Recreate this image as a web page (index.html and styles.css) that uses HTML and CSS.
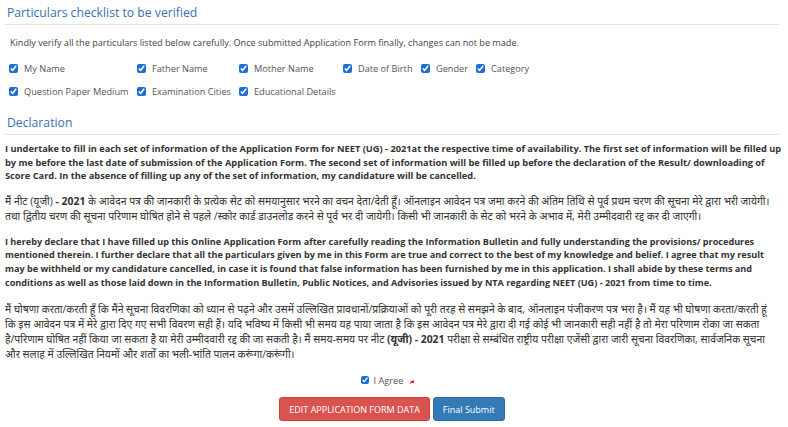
FILE: index.html
```html
<!DOCTYPE html>
<html lang="en">
<head>
<meta charset="utf-8">
<title>Particulars checklist</title>
<link rel="stylesheet" href="styles.css">
</head>
<body>
<div class="page">
  <h2 class="section-title">Particulars checklist to be verified</h2>
  <p class="note">Kindly verify all the particulars listed below carefully. Once submitted Application Form finally, changes can not be made.</p>
  <div class="checklist">
    <label class="check"><input type="checkbox" checked><span>My Name</span></label>
    <label class="check"><input type="checkbox" checked><span>Father Name</span></label>
    <label class="check"><input type="checkbox" checked><span>Mother Name</span></label>
    <label class="check"><input type="checkbox" checked><span>Date of Birth</span></label>
    <label class="check"><input type="checkbox" checked><span>Gender</span></label>
    <label class="check"><input type="checkbox" checked><span>Category</span></label>
    <label class="check"><input type="checkbox" checked><span>Question Paper Medium</span></label>
    <label class="check"><input type="checkbox" checked><span>Examination Cities</span></label>
    <label class="check"><input type="checkbox" checked><span>Educational Details</span></label>
  </div>

  <h2 class="section-title decl-title">Declaration</h2>
  <div class="declaration">
    <p class="en en-lead">I undertake to fill in each set of information of the Application Form for NEET (UG) - 2021at the respective time of availability. The first set of information will be filled up<br>by me before the last date of submission of the Application Form. The second set of information will be filled up before the declaration of the Result/ downloading of<br>Score Card. In the absence of filling up any of the set of information, my candidature will be cancelled.</p>
    <p class="hi" lang="hi">मैं नीट (यूजी) <b>- 2021</b> के आवेदन पत्र की जानकारी के प्रत्येक सेट को समयानुसार भरने का वचन देता/देती हूँ। ऑनलाइन आवेदन पत्र जमा करने की अंतिम तिथि से पूर्व प्रथम चरण की सूचना मेरे द्वारा भरी जायेगी।<br>तथा द्वितीय चरण की सूचना परिणाम घोषित होने से पहले /स्कोर कार्ड डाउनलोड करने से पूर्व भर दी जायेगी। किसी भी जानकारी के सेट को भरने के अभाव में, मेरी उम्मीदवारी रद्द कर दी जाएगी।</p>
    <p class="en en-main">I hereby declare that I have filled up this Online Application Form after carefully reading the Information Bulletin and fully understanding the provisions/ procedures<br>mentioned therein. I further declare that all the particulars given by me in this Form are true and correct to the best of my knowledge and belief. I agree that my result<br>may be withheld or my candidature cancelled, in case it is found that false information has been furnished by me in this application. I shall abide by these terms and<br>conditions as well as those laid down in the Information Bulletin, Public Notices, and Advisories issued by NTA regarding NEET (UG) - 2021 from time to time.</p>
    <p class="hi" lang="hi">मैं घोषणा करता/करती हूँ कि मैंने सूचना विवरणिका को ध्यान से पढ़ने और उसमें उल्लिखित प्रावधानों/प्रक्रियाओं को पूरी तरह से समझने के बाद, ऑनलाइन पंजीकरण पत्र भरा है। मैं यह भी घोषणा करता/करती हूं<br>कि इस आवेदन पत्र में मेरे द्वारा दिए गए सभी विवरण सही हैं। यदि भविष्य में किसी भी समय यह पाया जाता है कि इस आवेदन पत्र मेरे द्वारा दी गई कोई भी जानकारी सही नहीं है तो मेरा परिणाम रोका जा सकता<br>है/परिणाम घोषित नहीं किया जा सकता है या मेरी उम्मीदवारी रद्द की जा सकती है। मैं समय-समय पर नीट <b>(यूजी) - 2021</b> परीक्षा से सम्बंधित राष्ट्रीय परीक्षा एजेंसी द्वारा जारी सूचना विवरणिका, सार्वजनिक सूचना<br>और सलाह में उल्लिखित नियमों और शर्तों का भली-भांति पालन करूंगा/करूंगी।</p>
  </div>

  <div class="agree">
    <label class="check"><input type="checkbox" checked><span>I Agree</span></label>
    <svg class="req" width="7" height="5" viewBox="0 0 7 5" aria-hidden="true"><path d="M0.5 4.5 L3 2.2 L2.2 1 L6.5 0.5 L5.5 3.4 L4.3 2.8 Z" fill="#d9262b"/></svg>
  </div>

  <div class="actions">
    <button class="btn btn-danger" type="button">EDIT APPLICATION FORM DATA</button>
    <button class="btn btn-primary" type="button">Final Submit</button>
  </div>
</div>
</body>
</html>
```

FILE: styles.css
```css
html, body {
  margin: 0;
  padding: 0;
  background: #ffffff;
}

body {
  font-family: "Open Sans", "Noto Sans", "Noto Sans Devanagari", sans-serif;
  color: #333333;
  font-size: 9px;
}

.page {
  padding: 3px 2px 0 5px;
}

.section-title {
  margin: 0 7px 0 0;
  padding: 0 0 2px 2px;
  font-size: 12.2px;
  line-height: 19px;
  font-weight: 400;
  color: #3a6fb4;
  border-bottom: 1px solid #e3e3e3;
}

.note {
  margin: 11px 0 0 5px;
  font-size: 9.1px;
  line-height: 14px;
  color: #444;
}

.checklist {
  margin-top: 7px;
  padding-left: 4px;
  display: grid;
  grid-template-columns: 128px 102px 104px 78px 55px auto;
  grid-auto-rows: 23px;
  align-items: center;
}

.check {
  display: flex;
  align-items: center;
  gap: 6px;
  font-size: 9.2px;
  color: #555;
  white-space: nowrap;
}

.check input {
  margin: 0;
  width: 9px;
  height: 9px;
  accent-color: #1e6fd4;
}

.decl-title {
  margin-top: 10px;
}

.declaration {
  margin-top: 7px;
}

.declaration p {
  margin: 0 0 11px;
}

.en {
  font-weight: 700;
  font-size: 9.1px;
  line-height: 13.6px;
  color: #333;
}

.en-lead {
  font-size: 9.25px;
}

.en-main {
  margin-top: 12px;
  margin-bottom: 13px;
}

.declaration p.en-main {
  margin-bottom: 13px;
}

.hi {
  font-size: 10.4px;
  line-height: 15px;
  color: #333;
}

.agree {
  display: flex;
  justify-content: center;
  align-items: center;
  gap: 5px;
  height: 14px;
  margin: 11px 15px 0 0;
}

.agree .check {
  gap: 5px;
}

.agree .check input {
  width: 8px;
  height: 8px;
}

.agree .req {
  margin-top: 5px;
}

.actions {
  display: flex;
  justify-content: center;
  gap: 3px;
  margin: 10px 7px 0 0;
}

.btn {
  font-family: inherit;
  font-size: 9px;
  height: 24px;
  padding: 0 9px;
  border-radius: 3px;
  color: #ffffff;
  cursor: pointer;
}

.btn-danger {
  background: #d9534f;
  border: 1px solid #d43f3a;
}

.btn-primary {
  background: #337ab7;
  border: 1px solid #2e6da4;
}
```
